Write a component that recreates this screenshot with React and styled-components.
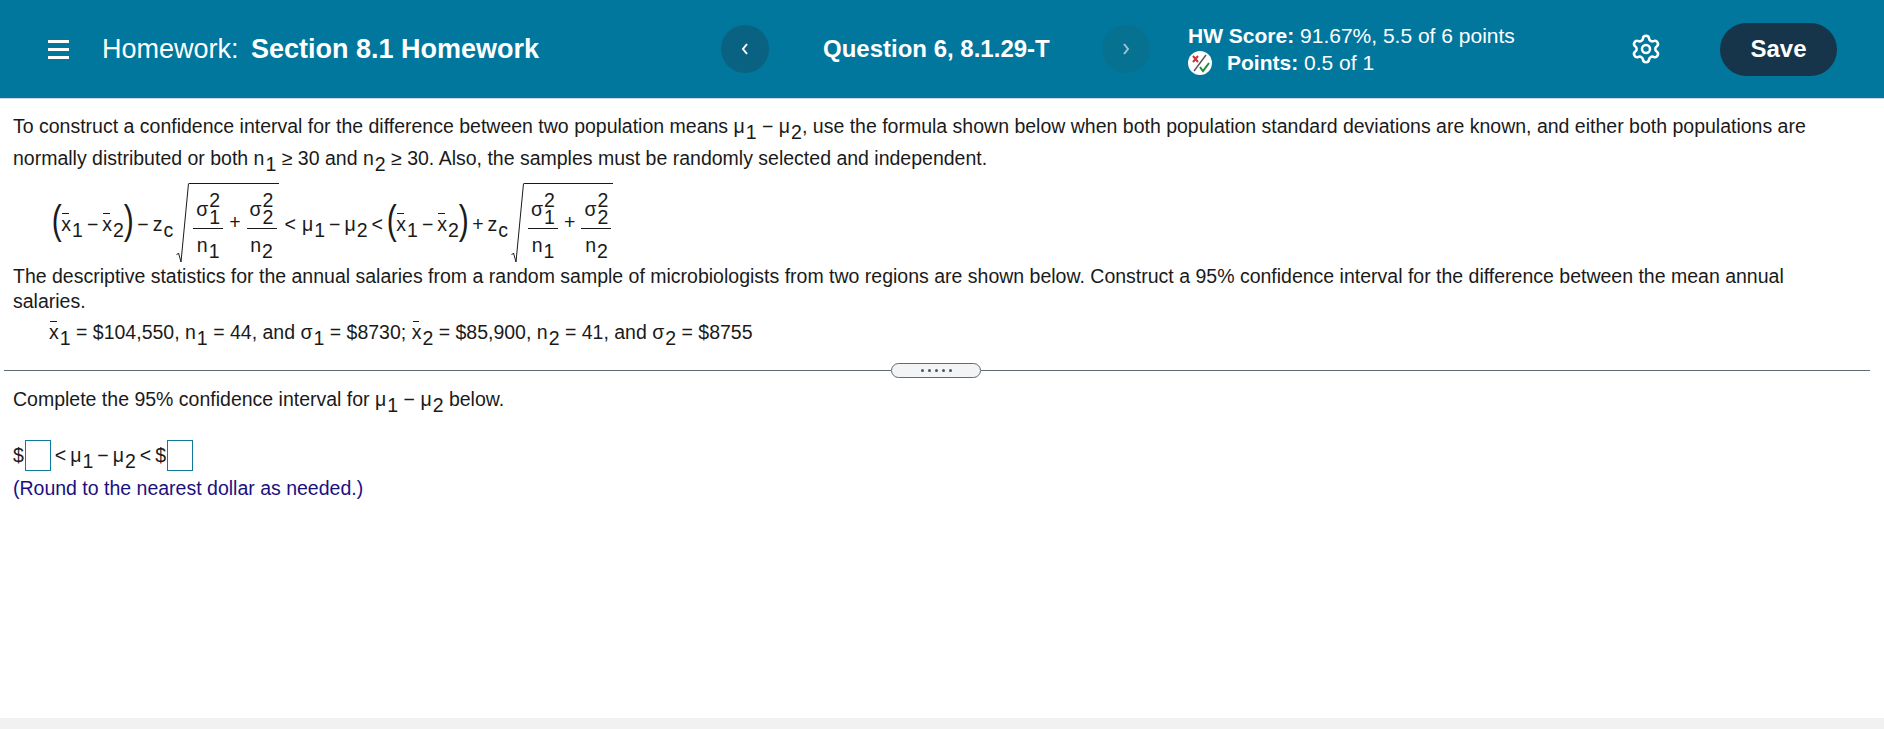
import React from 'react';
import styled, { createGlobalStyle } from 'styled-components';
import { Settings } from 'lucide-react';

const Global = createGlobalStyle`
	html, body { margin: 0; padding: 0; background: #fff; }
	body { font-family: "Liberation Sans", Arial, sans-serif; color: #1a1a1a; }
`;

const Page = styled.div`
	height: 729px;
	display: flex;
	flex-direction: column;
	overflow: hidden;
`;

const Header = styled.header`
	height: 99px;
	flex: none;
	box-sizing: border-box;
	display: flex;
	align-items: center;
	background: #01779d;
	color: #fff;
	border-bottom: 1px solid #cbd6e4;
`;

const Menu = styled.div`
	width: 21px;
	height: 19px;
	margin-left: 48px;
	flex: none;
	display: flex;
	flex-direction: column;
	justify-content: space-between;
	span { display: block; height: 3px; background: #fff; }
`;

const Title = styled.h1`
	width: 619px;
	margin: 0 0 0 33px;
	flex: none;
	font-size: 27px;
	font-weight: 400;
	white-space: nowrap;
	b { margin-left: 5px; }
`;

const NavButton = styled.button`
	width: 48px;
	height: 48px;
	padding: 0;
	flex: none;
	border: 0;
	border-radius: 50%;
	display: flex;
	align-items: center;
	justify-content: center;
	background: ${p => (p.$off ? '#067190' : '#0a6282')};
	svg { display: block; }
`;

const QuestionLabel = styled.div`
	width: 333px;
	box-sizing: border-box;
	flex: none;
	padding-left: 54px;
	font-size: 24px;
	font-weight: 700;
	white-space: nowrap;
`;

const Score = styled.div`
	width: 442px;
	margin-left: 38px;
	flex: none;
	font-size: 21px;
	line-height: 27px;
	white-space: nowrap;
`;

const PointsRow = styled.div`
	display: flex;
	align-items: center;
	gap: 15px;
`;

const Gear = styled.div`
	width: 32px;
	height: 32px;
	flex: none;
	svg { display: block; }
`;

const SaveButton = styled.button`
	width: 117px;
	height: 53px;
	margin-left: 58px;
	flex: none;
	border: 0;
	border-radius: 27px;
	background: #16344a;
	color: #fff;
	font: 700 24px "Liberation Sans", Arial, sans-serif;
`;

const Content = styled.main`
	flex: 1;
	display: flex;
	flex-direction: column;
`;

const Top = styled.section`
	padding: 11px 40px 0 13px;
	font-size: 19.5px;
`;

const Para = styled.div`
	line-height: ${p => p.$lh || 32}px;
	white-space: nowrap;
`;

const Indented = styled(Para)`
	padding-left: 36px;
	margin-top: 3px;
	line-height: 30px;
`;

const Sub = styled.sub`
	font-size: 19.5px;
	line-height: 0;
	vertical-align: -6px;
	margin-left: 1px;
`;

const Bar = styled.span`
	position: relative;
	display: inline-block;
	line-height: 1;
	&::before {
		content: '';
		position: absolute;
		left: 1px;
		right: 2px;
		top: -2px;
		height: 1px;
		background: #1a1a1a;
	}
`;

const Op = styled.span`
	margin: 0 ${p => p.$m ?? 4}px;
`;

const Formula = styled.div`
	height: 83px;
	margin-top: 7px;
	padding-left: 39px;
	display: flex;
	align-items: center;
	white-space: nowrap;
	line-height: 1;
`;

const Chunk = styled.span`
	display: inline-block;
	flex: none;
	margin-top: 4px;
`;

const Paren = styled.span`
	display: inline-block;
	font-size: 40px;
	font-weight: 300;
	line-height: 1;
	transform: scaleX(0.75);
	margin: -6px -2px 0;
`;

const Radical = styled.div`
	display: flex;
	align-items: stretch;
	height: 80px;
	flex: none;
	margin: 0 0 0 3px;
	svg { flex: none; display: block; }
`;

const RadicalBody = styled.div`
	border-top: 1px solid #1a1a1a;
	display: flex;
	align-items: center;
	padding: 0 2px 0 4px;
`;

const Frac = styled.div`
	display: inline-flex;
	flex-direction: column;
	align-items: center;
	width: 30px;
	> div:first-child {
		height: 44px;
		display: flex;
		align-items: flex-end;
		padding-bottom: 8px;
		box-sizing: border-box;
	}
	> div:last-child {
		height: 35px;
		border-top: 1px solid #1a1a1a;
		width: 100%;
		text-align: center;
		padding-top: 7px;
		box-sizing: border-box;
	}
`;

const Sigma = styled.span`
	position: relative;
	display: inline-block;
	margin-right: 12px;
	small {
		position: absolute;
		left: 100%;
		font-size: 19.5px;
		line-height: 1;
		margin-left: 1px;
	}
	small:first-of-type { top: -9px; }
	small:last-of-type { top: 8px; }
`;

const Divider = styled.div`
	height: 15px;
	margin: 16px 14px 0 4px;
	display: flex;
	align-items: center;
	&::before, &::after {
		content: '';
		height: 1px;
		background: #5f6b78;
	}
	&::before { width: 887px; flex: none; }
	&::after { flex: 1; }
`;

const Grip = styled.div`
	width: 90px;
	height: 15px;
	flex: none;
	box-sizing: border-box;
	border: 1px solid #5f6b78;
	border-radius: 8px;
	background: #f3f4f6;
	display: flex;
	align-items: center;
	justify-content: center;
	gap: 4px;
	span { width: 3px; height: 3px; background: #4a5560; border-radius: 50%; }
`;

const Bottom = styled.section`
	padding: 6px 13px 0;
	font-size: 19.5px;
`;

const AnswerRow = styled.div`
	margin-top: 26px;
	height: 31px;
	line-height: 31px;
	white-space: pre;
`;

const AnswerBox = styled.input`
	width: 26px;
	height: 31px;
	box-sizing: border-box;
	margin: 0 0 0 1px;
	border: 1px solid #0f7a9c;
	background: #fff;
	padding: 0;
	vertical-align: top;
`;

const Hint = styled.div`
	margin-top: 4px;
	line-height: 27px;
	color: #1a1080;
`;

const Footer = styled.footer`
	height: 11px;
	flex: none;
	background: #f1f1f1;
`;

const RadicalSign = () => (
	<svg width="13" height="80" viewBox="0 0 13 80" fill="none" stroke="#1a1a1a">
		<path d="M12.5 0.5 L5 79 L2.5 70 L0.5 72" strokeWidth="1" />
	</svg>
);

const ScoreIcon = () => (
	<svg width="24" height="24" viewBox="0 0 24 24">
		<circle cx="12" cy="12" r="12" fill="#fff" />
		<path d="M5 5l5 6M10 5l-5 6" stroke="#c8343a" strokeWidth="2" />
		<path d="M6 20L18 4" stroke="#555" strokeWidth="1.4" />
		<path d="M12 16l3 4 6-8" stroke="#1a8a3c" strokeWidth="2" fill="none" />
	</svg>
);

const X = ({ n }) => <><Bar>x</Bar><Sub>{n}</Sub></>;
const Mu = ({ n }) => <>μ<Sub>{n}</Sub></>;

const Fraction = ({ n }) => (
	<Frac>
		<div>
			<Sigma>σ<small>2</small><small>{n}</small></Sigma>
		</div>
		<div>n<Sub>{n}</Sub></div>
	</Frac>
);

const Root = () => (
	<Radical>
		<RadicalSign />
		<RadicalBody>
			<Fraction n="1" />
			<Op $m={6}>+</Op>
			<Fraction n="2" />
		</RadicalBody>
	</Radical>
);

const Difference = () => (
	<>
		<Paren>(</Paren>
		<Chunk><X n="1" /><Op>−</Op><X n="2" /></Chunk>
		<Paren>)</Paren>
	</>
);

export default function App() {
	return (
		<Page>
			<Global />
			<Header>
				<Menu><span /><span /><span /></Menu>
				<Title>Homework: <b>Section 8.1 Homework</b></Title>
				<NavButton>
					<svg width="8" height="12" viewBox="0 0 8 12" fill="none" stroke="#fff" strokeWidth="2"><path d="M6 1L2 6l4 5" /></svg>
				</NavButton>
				<QuestionLabel>Question 6, 8.1.29-T</QuestionLabel>
				<NavButton $off>
					<svg width="8" height="12" viewBox="0 0 8 12" fill="none" stroke="#9cc6d4" strokeWidth="2"><path d="M2 1l4 5-4 5" /></svg>
				</NavButton>
				<Score>
					<div><b>HW Score:</b> 91.67%, 5.5 of 6 points</div>
					<PointsRow><ScoreIcon /><span><b>Points:</b> 0.5 of 1</span></PointsRow>
				</Score>
				<Gear><Settings size={32} strokeWidth={1.9} color="#fff" /></Gear>
				<SaveButton>Save</SaveButton>
			</Header>
			<Content>
				<Top>
					<Para>To construct a confidence interval for the difference between two population means <Mu n="1" /> − <Mu n="2" />, use the formula shown below when both population standard deviations are known, and either both populations are</Para>
					<Para>normally distributed or both n<Sub>1</Sub> ≥ 30 and n<Sub>2</Sub> ≥ 30. Also, the samples must be randomly selected and independent.</Para>
					<Formula>
						<Difference />
						<Chunk><Op>−</Op>z<Sub>c</Sub></Chunk>
						<Root />
						<Chunk><Op $m={6}>&lt;</Op><Mu n="1" /><Op>−</Op><Mu n="2" /><Op>&lt;</Op></Chunk>
						<Difference />
						<Chunk><Op>+</Op>z<Sub>c</Sub></Chunk>
						<Root />
					</Formula>
					<Para $lh={25}>The descriptive statistics for the annual salaries from a random sample of microbiologists from two regions are shown below. Construct a 95% confidence interval for the difference between the mean annual</Para>
					<Para $lh={25}>salaries.</Para>
					<Indented><X n="1" /> = $104,550, n<Sub>1</Sub> = 44, and σ<Sub>1</Sub> = $8730; <X n="2" /> = $85,900, n<Sub>2</Sub> = 41, and σ<Sub>2</Sub> = $8755</Indented>
				</Top>
				<Divider><Grip><span /><span /><span /><span /><span /></Grip></Divider>
				<Bottom>
					<Para $lh={30}>Complete the 95% confidence interval for <Mu n="1" /> − <Mu n="2" /> below.</Para>
					<AnswerRow>$<AnswerBox readOnly /><Op>&lt;</Op><Mu n="1" /><Op>−</Op><Mu n="2" /><Op>&lt;</Op>$<AnswerBox readOnly /></AnswerRow>
					<Hint>(Round to the nearest dollar as needed.)</Hint>
				</Bottom>
			</Content>
			<Footer />
		</Page>
	);
}
